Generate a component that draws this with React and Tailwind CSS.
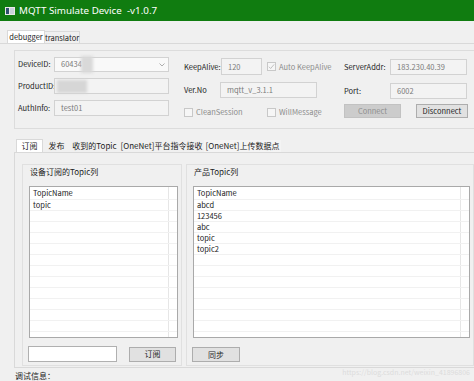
import React from "react";

function Field({ className = "", children }) {
  return (
    <div
      className={`relative flex items-center border border-[#d2d2d2] bg-[#f3f3f3] pl-[6px] text-[7.5px] leading-none text-[#7b7b7b] whitespace-nowrap ${className}`}
    >
      {children}
    </div>
  );
}

function Check({ checked, label, className = "" }) {
  return (
    <div className={`flex items-center gap-[3px] whitespace-nowrap ${className}`}>
      <div className="w-[9px] h-[9px] shrink-0 border border-[#c8c8c8] bg-[#f6f6f6] flex items-center justify-center">
        {checked && (
          <svg viewBox="0 0 8 8" className="w-[7px] h-[7px]">
            <path d="M1 4.3 L3 6.3 L7 1.6" stroke="#b9b9b9" strokeWidth="1" fill="none" />
          </svg>
        )}
      </div>
      <span className="text-[7.5px] leading-none text-[#8c8c8c]">{label}</span>
    </div>
  );
}

function Button({ className = "", disabled, children }) {
  return (
    <div
      className={`flex items-center justify-center border text-[7.5px] leading-none whitespace-nowrap ${
        disabled
          ? "bg-[#cccccc] border-[#c2c2c2] text-[#8e8e8e]"
          : "bg-[#e1e1e1] border-[#adadad] text-[#1e1e1e]"
      } ${className}`}
    >
      {children}
    </div>
  );
}

function TopicList({ items, className = "" }) {
  const rows = [...items];
  while (rows.length < 13) rows.push("");
  return (
    <div className={`bg-white border border-[#a9a9a9] overflow-hidden ${className}`}>
      <div className="flex h-[13px] border-b border-[#f1f1f1]">
        <div className="flex-1 flex items-center pl-[3px] text-[7.5px] text-[#222]">TopicName</div>
        <div className="w-[9px] border-l border-[#e6e6e6]" />
      </div>
      {rows.map((r, i) => (
        <div key={i} className="flex h-[11px] border-b border-[#f1f1f1]">
          <div className="flex-1 flex items-center pl-[3px] text-[7.5px] leading-none text-[#222]">{r}</div>
          <div className="w-[9px] border-l border-[#e6e6e6]" />
        </div>
      ))}
    </div>
  );
}

function Label({ className = "", children }) {
  return (
    <span className={`shrink-0 whitespace-nowrap text-[7.5px] leading-none text-[#1e1e1e] ${className}`}>
      {children}
    </span>
  );
}

export default function App() {
  return (
    <div className="w-[474px] h-[381px] overflow-hidden bg-[#f0f0f0] flex flex-col font-['Noto_Sans_CJK_SC','Noto_Sans',sans-serif]">
      {/* title bar */}
      <div className="h-[21px] shrink-0 bg-[#107c10] flex items-center pl-[5px] gap-[4px]">
        <svg width="10" height="8" viewBox="0 0 10 8">
          <rect x="0" y="0" width="10" height="8" fill="#e8e8e8" />
          <rect x="1" y="1" width="3" height="6" fill="#2f4f6f" />
          <rect x="5" y="1" width="4" height="6" fill="#c9d3dc" />
        </svg>
        <span className="text-white text-[9.8px] leading-none font-['Noto_Sans',sans-serif]">
          MQTT Simulate Device&nbsp; -v1.0.7
        </span>
      </div>

      {/* top tabs */}
      <div className="mt-[9px] h-[13px] pl-[7px] flex items-end shrink-0">
        <div className="w-[38px] h-[13px] bg-white border border-[#d9d9d9] border-b-0 flex items-center justify-center text-[7.5px] text-[#222]">
          debugger
        </div>
        <div className="w-[35px] h-[12px] border border-[#dadada] border-b-0 border-l-0 flex items-center justify-center text-[7.5px] text-[#222]">
          translator
        </div>
      </div>

      <div className="flex-1 border-t border-[#d9d9d9] flex flex-col">
        {/* connection group */}
        <div className="mt-[6px] ml-[14px] w-[470px] h-[79px] shrink-0 border border-[#dcdcdc] flex">
          <div className="ml-[3px] w-[151px] shrink-0 pt-[5px] flex flex-col gap-[6px]">
            <div className="h-[16px] flex items-center">
              <Label className="w-[36px]">DeviceID:</Label>
              <div className="relative w-[115px] h-[15px] border border-[#d2d2d2] bg-[#f9f9f9] flex items-center pl-[6px] text-[7.5px] leading-none text-[#7b7b7b]">
                60434
                <div className="absolute left-[26px] top-[-2px] w-[12px] h-[17px] bg-[#d9d9d9] blur-[1.5px]" />
                <svg className="absolute right-[3px] top-[5px]" width="6" height="4" viewBox="0 0 6 4">
                  <path d="M0.5 0.5 L3 3 L5.5 0.5" stroke="#9a9a9a" fill="none" strokeWidth="0.8" />
                </svg>
              </div>
            </div>
            <div className="h-[16px] flex items-center">
              <Label className="w-[36px]">ProductID:</Label>
              <Field className="w-[115px] h-[16px]">
                <div className="absolute left-[2px] top-[1px] w-[30px] h-[13px] bg-[#d6d6d6] blur-[1.5px]" />
              </Field>
            </div>
            <div className="h-[16px] flex items-center">
              <Label className="w-[36px]">AuthInfo:</Label>
              <Field className="w-[115px] h-[16px]">test01</Field>
            </div>
          </div>

          <div className="ml-[15px] w-[141px] shrink-0 pt-[7px] flex flex-col">
            <div className="h-[17px] flex items-center">
              <Label className="w-[37px]">KeepAlive:</Label>
              <Field className="w-[41px] h-[17px] shrink-0">120</Field>
              <Check checked label="Auto KeepAlive" className="ml-[5px]" />
            </div>
            <div className="mt-[7px] h-[16px] flex items-center">
              <Label className="w-[36px]">Ver.No</Label>
              <Field className="w-[97px] h-[16px]">mqtt_v_3.1.1</Field>
            </div>
            <div className="mt-[8px] h-[12px] flex items-center">
              <Check label="CleanSession" className="w-[83px]" />
              <Check label="WillMessage" />
            </div>
          </div>

          <div className="ml-[19px] pt-[8px] flex flex-col">
            <div className="h-[16px] flex items-center">
              <Label className="w-[46px]">ServerAddr:</Label>
              <Field className="w-[77px] h-[16px]">183.230.40.39</Field>
            </div>
            <div className="mt-[8px] h-[16px] flex items-center">
              <Label className="w-[46px]">Port:</Label>
              <Field className="w-[77px] h-[16px]">6002</Field>
            </div>
            <div className="mt-[5px] h-[14px] flex items-center">
              <Button disabled className="w-[57px] h-[14px]">Connect</Button>
              <Button className="ml-[15px] w-[52px] h-[14px]">Disconnect</Button>
            </div>
          </div>
        </div>

        {/* sub tabs */}
        <div className="mt-[10px] ml-[16px] h-[13px] flex items-end shrink-0 text-[8px] leading-none text-[#222] whitespace-nowrap">
          <div className="w-[27px] h-[13px] bg-white border border-[#d9d9d9] border-b-0 flex items-center justify-center">订阅</div>
          <div className="w-[27px] h-[12px] flex items-center justify-center">发布</div>
          <div className="w-[49px] h-[12px] flex items-center justify-center">收到的Topic</div>
          <div className="w-[85px] h-[12px] flex items-center justify-center">[OneNet]平台指令接收</div>
          <div className="w-[77px] h-[12px] bg-[#f4f4f4] flex items-center justify-center">[OneNet]上传数据点</div>
        </div>

        {/* sub pane */}
        <div className="ml-[14px] h-[216px] shrink-0 border-t border-l border-b border-[#d9d9d9] flex items-start">
          <div className="ml-[7px] mt-[11px] w-[161px] h-[202px] border border-[#e0e0e0] flex flex-col">
            <div className="mt-[2px] ml-[7px] h-[10px] text-[8px] leading-[10px] text-[#222]">设备订阅的Topic列</div>
            <TopicList items={["topic"]} className="mt-[9px] ml-[6px] w-[149px] h-[152px]" />
            <div className="mt-[8px] flex items-center">
              <div className="ml-[5px] w-[89px] h-[16px] bg-white border border-[#b0b0b0]" />
              <Button className="ml-[12px] w-[47px] h-[15px] text-[8px]">订阅</Button>
            </div>
          </div>
          <div className="ml-[4px] mt-[11px] w-[290px] h-[202px] border border-[#e0e0e0] flex flex-col">
            <div className="mt-[2px] ml-[7px] h-[10px] text-[8px] leading-[10px] text-[#222]">产品Topic列</div>
            <TopicList
              items={["abcd", "123456", "abc", "topic", "topic2"]}
              className="mt-[9px] ml-[6px] w-[277px] h-[152px]"
            />
            <Button className="mt-[9px] ml-[5px] w-[48px] h-[15px] text-[8px]">同步</Button>
          </div>
        </div>

        {/* footer */}
        <div className="h-[14px] flex items-center justify-between pl-[15px] pr-[4px]">
          <span className="text-[8px] leading-none text-[#222] mt-[2px]">调试信息：</span>
          <span className="text-[7px] leading-none text-[#dcdcdc] -mt-[6px]">https://blog.csdn.net/weixin_41896806</span>
        </div>
      </div>
    </div>
  );
}
